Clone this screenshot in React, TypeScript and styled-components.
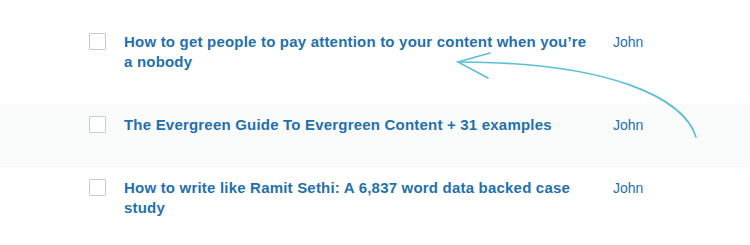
import React from 'react';
import styled, { createGlobalStyle } from 'styled-components';

const GlobalStyle = createGlobalStyle`
    html, body {
        margin: 0;
        padding: 0;
        background: #ffffff;
    }
    body {
        font-family: 'Liberation Sans', Arial, sans-serif;
        -webkit-font-smoothing: antialiased;
    }
`;

const Page = styled.div`
    position: relative;
    width: 750px;
    height: 245px;
    overflow: hidden;
    padding-top: 21px;
    box-sizing: border-box;
`;

const List = styled.div`
    display: flex;
    flex-direction: column;
`;

const Row = styled.div<{ $striped?: boolean }>`
    display: grid;
    grid-template-columns: 17px 470px auto;
    column-gap: 18px;
    align-items: start;
    padding: 11px 0 32px 89px;
    background: ${(p) => (p.$striped ? '#f9fafa' : 'transparent')};
`;

const CheckBox = styled.span`
    display: block;
    width: 17px;
    height: 17px;
    margin-top: 1px;
    box-sizing: border-box;
    border: 1.5px solid #c9cbd1;
    border-radius: 1px;
    background: #ffffff;
`;

const Title = styled.a`
    font-size: 15px;
    line-height: 20px;
    letter-spacing: 0.2px;
    font-weight: 700;
    color: #1f70ad;
    text-decoration: none;
`;

const Author = styled.span`
    margin-left: 1px;
    font-size: 14px;
    line-height: 20px;
    color: #1f70ad;
`;

const ArrowOverlay = styled.svg`
    position: absolute;
    left: 0;
    top: 0;
    pointer-events: none;
`;

const posts = [
    { id: 1, title: 'How to get people to pay attention to your content when you\u2019re a nobody', author: 'John' },
    { id: 2, title: 'The Evergreen Guide To Evergreen Content + 31 examples', author: 'John' },
    { id: 3, title: 'How to write like Ramit Sethi: A 6,837 word data backed case study', author: 'John' },
];

export default function App() {
    return (
        <Page>
            <GlobalStyle />
            <List>
                {posts.map((post, i) => (
                    <Row key={post.id} $striped={i % 2 === 1}>
                        <CheckBox />
                        <Title href="#">{post.title}</Title>
                        <Author>{post.author}</Author>
                    </Row>
                ))}
            </List>
            <ArrowOverlay width="750" height="245" viewBox="0 0 750 245">
                <g fill="none" stroke="#5cbfd5" strokeWidth="1.6" strokeLinecap="round">
                    <path d="M 696 137 C 684 98, 610 62, 458 62" />
                    <path d="M 490 53 L 458 62 L 488 78" />
                </g>
            </ArrowOverlay>
        </Page>
    );
}
